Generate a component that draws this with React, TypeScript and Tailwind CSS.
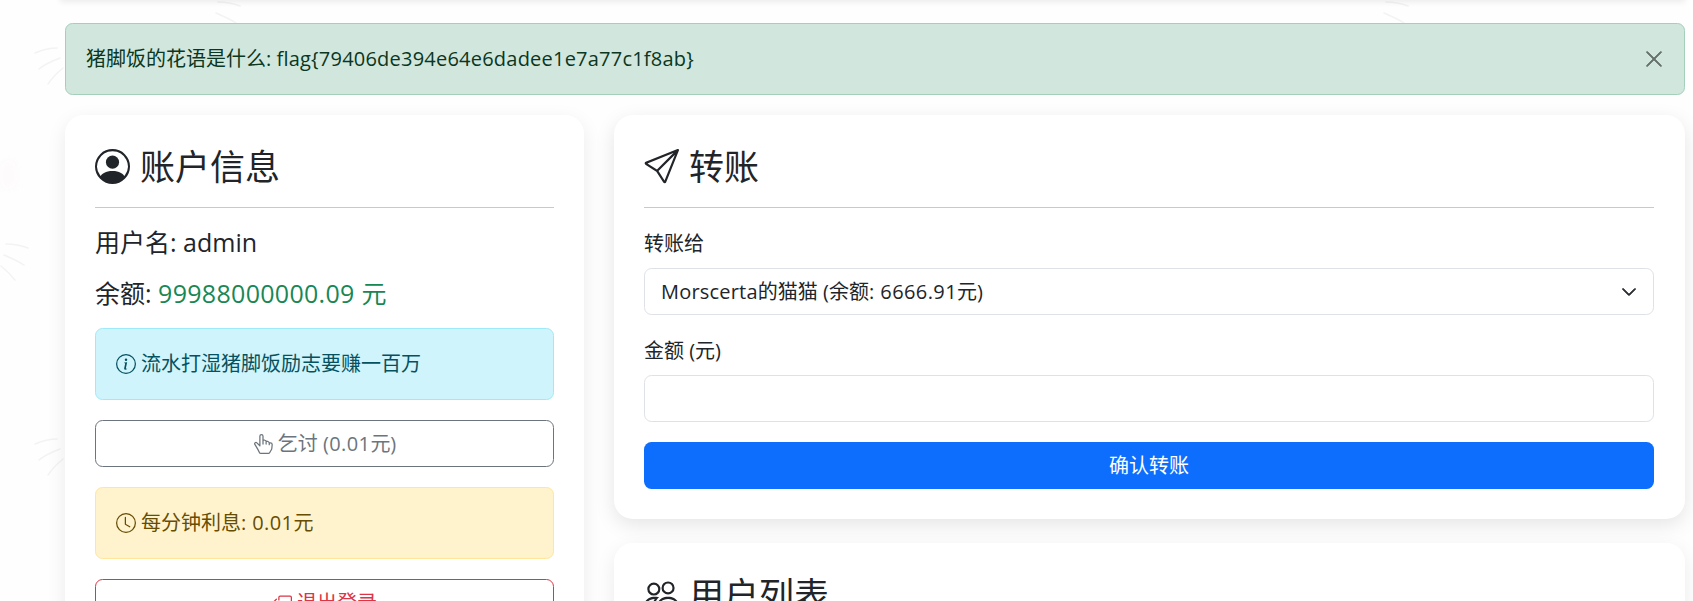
import { BsBoxArrowLeft, BsClock, BsHandIndexThumb, BsInfoCircle, BsPeople, BsPersonCircle, BsSend, BsXLg, BsChevronDown } from "react-icons/bs";

const font = "font-['Open_Sans','Noto_Sans_CJK_SC',sans-serif]";

// faint whisker marks behind the cards
function WhiskerA({ className }: { className: string }) {
  return (
    <svg className={`absolute ${className}`} width="32" height="40" viewBox="0 0 32 40" fill="none" stroke="#f3f3f3" strokeWidth="1.5" strokeLinecap="round">
      <path d="M1 7 C8 4 15 2 23 2" />
      <path d="M5 23 C11 18 18 15 26 12" />
      <path d="M14 38 C18 32 23 27 29 22" />
    </svg>
  );
}

function WhiskerB({ className }: { className: string }) {
  return (
    <svg className={`absolute ${className}`} width="30" height="40" viewBox="0 0 30 40" fill="none" stroke="#f3f3f3" strokeWidth="1.5" strokeLinecap="round">
      <path d="M6 2 C13 2 20 3 28 6" />
      <path d="M4 13 C11 16 18 19 24 23" />
      <path d="M1 24 C6 28 11 33 15 38" />
    </svg>
  );
}

function App() {
  return (
    <div className={`${font} relative h-screen overflow-hidden bg-[#fefefe] pl-[65px] pr-[8px] pt-[23px] text-[20px] leading-[30px] text-[#212529]`}>
      <WhiskerA className="left-[34px] top-[46px]" />
      <WhiskerB className="left-[0px] top-[242px]" />
      <WhiskerA className="left-[34px] top-[437px]" />
      <WhiskerB className="left-[212px] top-[0px]" />
      <WhiskerB className="left-[1380px] top-[0px]" />
      <div className="absolute left-[0px] top-[160px] h-[30px] w-[17px] rounded-full bg-[#fefbfc] blur-[3px]" />
      <div className="absolute left-[60px] right-[8px] top-[-10px] h-[10px] shadow-[0_2px_6px_rgba(0,0,0,0.08)]" />

      <div className="relative mb-[20px] flex h-[72px] items-center justify-between rounded-[7.5px] border border-[#a3cfbb] bg-[#d1e7dd] pl-[20px] pr-[20px] text-[#0a3622]">
        <span>猪脚饭的花语是什么: <span className="tracking-[0.22px]">flag{"{"}79406de394e64e6dadee1e7a77c1f8ab{"}"}</span></span>
        <BsXLg className="h-[20px] w-[20px] stroke-[0.7px] text-[#66706c]" />
      </div>

      <div className="relative grid grid-cols-[519px_1fr] gap-[30px]">
        <div className="rounded-[19px] bg-white/95 p-[30px] shadow-[0_6px_20px_rgba(0,0,0,0.08)]">
          <h3 className="flex h-[63px] items-start gap-[10px] border-b border-[#c9c9c9] text-[35px] leading-[44px]">
            <BsPersonCircle className="mt-[4px] h-[35px] w-[35px]" />
            账户信息
          </h3>
          <p className="mt-[16px] text-[25px] leading-[36px]">用户名: admin</p>
          <p className="mt-[15px] text-[25px] leading-[36px]">
            余额: <span className="tracking-[0.3px] text-[#198754]">99988000000.09 元</span>
          </p>
          <div className="mt-[17px] flex h-[72px] items-center gap-[5px] rounded-[7.5px] border border-[#9eeaf9] bg-[#cff4fc] px-[20px] text-[#055160]">
            <BsInfoCircle className="h-[20px] w-[20px]" />
            流水打湿猪脚饭励志要赚一百万
          </div>
          <button className="mt-[20px] flex h-[47px] w-full items-center justify-center gap-[5px] rounded-[7.5px] border border-[#6c757d] text-[#6c757d]">
            <BsHandIndexThumb className="h-[20px] w-[20px]" />
            <span>乞讨 <span className="tracking-[0.4px]">(0.01</span>元)</span>
          </button>
          <div className="mt-[20px] flex h-[72px] items-center gap-[5px] rounded-[7.5px] border border-[#ffe69c] bg-[#fff3cd] px-[20px] text-[#664d03]">
            <BsClock className="h-[20px] w-[20px]" />
            <span>每分钟利息<span className="tracking-[0.4px]">: 0.01</span>元</span>
          </div>
          <button className="mt-[20px] flex h-[47px] w-full items-center justify-center gap-[5px] rounded-[7.5px] border border-[#dc3545] text-[#dc3545]">
            <BsBoxArrowLeft className="h-[20px] w-[20px]" />
            退出登录
          </button>
        </div>

        <div className="flex flex-col gap-[24px]">
          <div className="rounded-[19px] bg-white py-[30px] pl-[30px] pr-[31px] shadow-[0_6px_20px_rgba(0,0,0,0.1)]">
            <h3 className="flex h-[63px] items-start gap-[10px] border-b border-[#c9c9c9] text-[35px] leading-[44px]">
              <BsSend className="mt-[4px] h-[35px] w-[35px]" />
              转账
            </h3>
            <label className="mt-[20px] mb-[8px] block leading-[32px]">转账给</label>
            <div className="flex h-[47px] items-center justify-between rounded-[7.5px] border border-[#dee2e6] px-[16px]">
              <span><span className="tracking-[0.2px]">Morscerta</span>的猫猫 <span className="tracking-[0.2px]">(</span>余额<span className="tracking-[0.4px]">: 6666.91</span>元)</span>
              <BsChevronDown className="h-[16px] w-[16px] stroke-1" />
            </div>
            <label className="mt-[20px] mb-[8px] block leading-[32px]">金额 (元)</label>
            <input className="block h-[47px] w-full rounded-[7.5px] border border-[#dee2e6]" />
            <button className="mt-[20px] h-[47px] w-full rounded-[7.5px] bg-[#0d6efd] text-white">确认转账</button>
          </div>
          <div className="rounded-[19px] bg-white/95 p-[30px] shadow-[0_6px_20px_rgba(0,0,0,0.08)]">
            <h3 className="flex h-[63px] items-start gap-[10px] text-[35px] leading-[44px]">
              <BsPeople className="mt-[4px] h-[35px] w-[35px]" />
              用户列表
            </h3>
          </div>
        </div>
      </div>
    </div>
  );
}

export default App;
